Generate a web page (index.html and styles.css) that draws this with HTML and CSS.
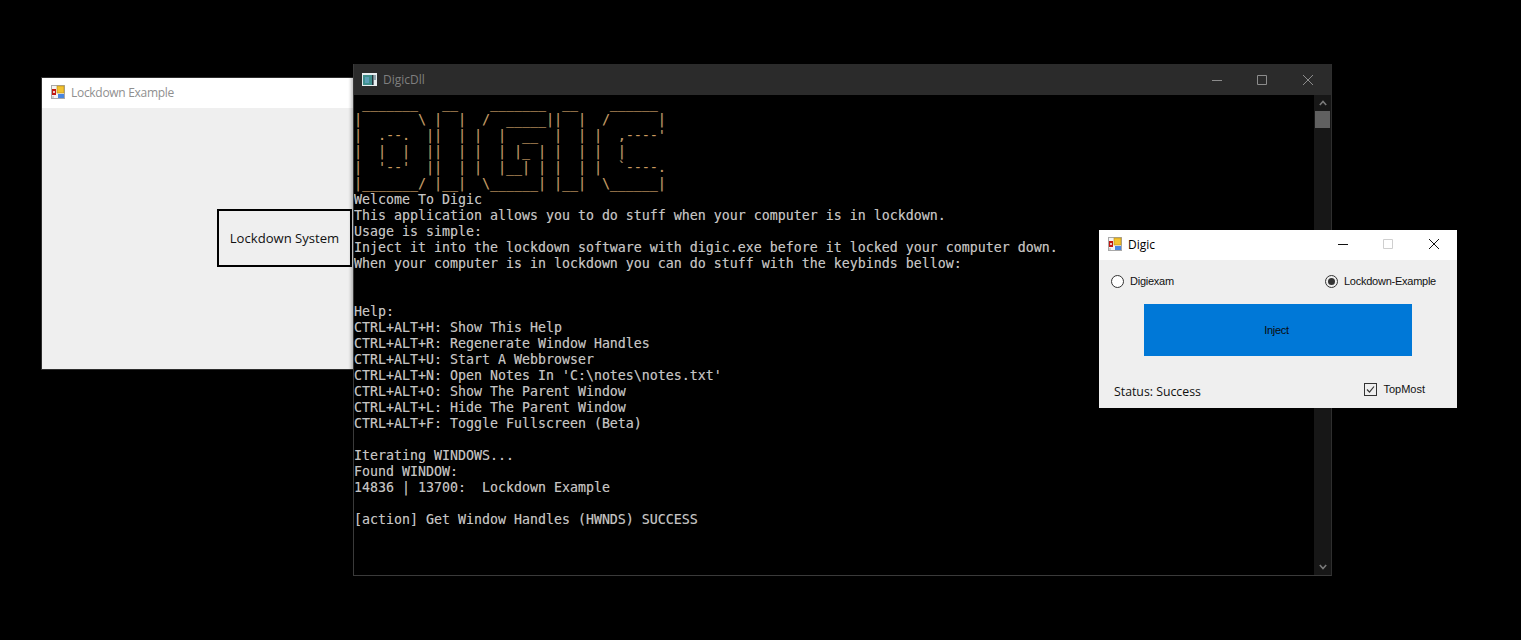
FILE: index.html
```
<!DOCTYPE html>
<html lang="en">
<head>
<meta charset="utf-8">
<title>Digic</title>
<link rel="stylesheet" href="styles.css">
</head>
<body>
<section class="window lockdown">
  <header class="titlebar light">
    <svg class="app-icon" viewBox="0 0 14 14"><rect x=".5" y=".5" width="13" height="13" fill="#f4f4f4" stroke="#a8a8a8"/><rect x="6" y="1" width="7" height="7" fill="#f2c230" stroke="#b98a10" stroke-width=".6"/><rect x="1" y="4" width="4" height="6" fill="#c21a12"/><rect x="2.2" y="6" width="1.6" height="2" fill="#f4f4f4"/><rect x="7" y="9" width="6" height="4" fill="#4a86e0"/><rect x="1" y="11" width="2" height="2" fill="#cfcfcf"/></svg>
    <span class="title muted">Lockdown Example</span>
  </header>
  <div class="lockdown-body">
    <button class="lock-button" type="button">Lockdown System</button>
  </div>
</section>

<section class="window console">
  <header class="titlebar dark">
    <svg class="console-icon" viewBox="0 0 15 13"><rect width="15" height="13" fill="#e8eef0"/><rect x="1" y="2" width="9" height="10" fill="#3f8f8c"/><rect x="3" y="4" width="4" height="6" fill="#5b9fb5"/><rect x="10" y="2" width="1.6" height="10" fill="#22343c"/><rect x="12" y="2" width="2" height="5" fill="#8fa4ad"/></svg>
    <span class="title dim">DigicDll</span>
    <div class="controls dark-controls">
      <svg viewBox="0 0 10 10"><path d="M0 5.5H10" /></svg>
      <svg viewBox="0 0 10 10"><path d="M.5.5H9.5V9.5H.5Z" /></svg>
      <svg viewBox="0 0 10 10"><path d="M0 0L10 10M10 0L0 10" /></svg>
    </div>
  </header>
  <div class="console-body">
    <pre class="output"><span class="art"> _______   __    _______  __    ______ 
|       \ |  |  /  _____||  |  /      |
|  .--.  ||  | |  |  __  |  | |  ,----'
|  |  |  ||  | |  | |_ | |  | |  |     
|  '--'  ||  | |  |__| | |  | |  `----.
|_______/ |__|  \______| |__|  \______|
</span>Welcome To Digic
This application allows you to do stuff when your computer is in lockdown.
Usage is simple:
Inject it into the lockdown software with digic.exe before it locked your computer down.
When your computer is in lockdown you can do stuff with the keybinds bellow:


Help:
CTRL+ALT+H: Show This Help
CTRL+ALT+R: Regenerate Window Handles
CTRL+ALT+U: Start A Webbrowser
CTRL+ALT+N: Open Notes In 'C:\notes\notes.txt'
CTRL+ALT+O: Show The Parent Window
CTRL+ALT+L: Hide The Parent Window
CTRL+ALT+F: Toggle Fullscreen (Beta)

Iterating WINDOWS...
Found WINDOW:
14836 | 13700:  Lockdown Example

[action] Get Window Handles (HWNDS) SUCCESS</pre>
    <div class="scrollbar">
      <svg class="arrow" viewBox="0 0 8 6"><path d="M.8 5L4 1.5 7.2 5" /></svg>
      <div class="thumb"></div>
      <div class="spacer"></div>
      <svg class="arrow" viewBox="0 0 8 6"><path d="M.8 1L4 4.5 7.2 1" /></svg>
    </div>
  </div>
</section>

<section class="window digic">
  <header class="titlebar light">
    <svg class="app-icon" viewBox="0 0 14 14"><rect x=".5" y=".5" width="13" height="13" fill="#f4f4f4" stroke="#a8a8a8"/><rect x="6" y="1" width="7" height="7" fill="#f2c230" stroke="#b98a10" stroke-width=".6"/><rect x="1" y="4" width="4" height="6" fill="#c21a12"/><rect x="2.2" y="6" width="1.6" height="2" fill="#f4f4f4"/><rect x="7" y="9" width="6" height="4" fill="#4a86e0"/><rect x="1" y="11" width="2" height="2" fill="#cfcfcf"/></svg>
    <span class="title">Digic</span>
    <div class="controls light-controls">
      <svg viewBox="0 0 10 10"><path d="M0 5.5H10" /></svg>
      <svg class="disabled" viewBox="0 0 10 10"><path d="M.5.5H9.5V9.5H.5Z" /></svg>
      <svg viewBox="0 0 10 10"><path d="M0 0L10 10M10 0L0 10" /></svg>
    </div>
  </header>
  <div class="digic-body">
    <div class="radio-row">
      <label class="radio"><span class="dot"></span>Digiexam</label>
      <label class="radio"><span class="dot on"></span>Lockdown-Example</label>
    </div>
    <button class="inject" type="button">Inject</button>
    <div class="status-row">
      <span class="status">Status: Success</span>
      <label class="check">
        <svg class="box" viewBox="0 0 13 13"><rect x=".5" y=".5" width="12" height="12" fill="none" stroke="#333"/><path d="M3 6.5L5.5 9.2 10 3.5" fill="none" stroke="#333" stroke-width="1.2"/></svg>
        TopMost
      </label>
    </div>
  </div>
</section>
</body>
</html>
```
FILE: styles.css
```
* { box-sizing: border-box; }
html, body { margin: 0; height: 100%; }
body { background: #000; overflow: hidden; position: relative; font-family: "Open Sans", "Noto Sans", sans-serif; }

.window { position: absolute; display: flex; flex-direction: column; }
.titlebar { display: flex; align-items: center; flex: none; }
.titlebar.light { background: #fff; height: 30px; padding-bottom: 2px; }
.titlebar.dark { background: #2b2b2b; height: 31px; }
.title { font-size: 12px; color: #000; }
.title.muted { color: #8f8f8f; letter-spacing: -.3px; }
.title.dim { color: #7f7f7f; }
.app-icon { width: 14px; height: 14px; flex: none; }

.controls { margin-left: auto; display: flex; gap: 35px; padding-right: 18px; }
.controls svg { width: 10px; height: 10px; fill: none; stroke-width: 1; flex: none; }
.controls svg:last-child { margin-left: 1px; }
.dark-controls svg { stroke: #8c8c8c; }
.light-controls svg { stroke: #111; }
.light-controls svg.disabled { stroke: #cfcfcf; }

/* Lockdown Example window */
.lockdown { left: 41px; top: 77px; width: 320px; height: 293px; border: 1px solid #2e2e2e; background: #efefef; }
.lockdown .titlebar { padding-left: 9px; gap: 6px; }
.lockdown-body { flex: 1; padding: 101px 0 0 175px; }
.lock-button { width: 135px; height: 58px; border: 2px solid #000; background: transparent; padding: 0; font: 13.1px "Open Sans", sans-serif; color: #111; }

/* Console window */
.console { left: 353px; top: 64px; width: 979px; height: 512px; border: 1px solid #3a3a3a; border-top: 0; border-right-color: #2e2e2e; background: #000; box-shadow: -2px 0 3px rgba(0,0,0,.25); }
.console .titlebar { padding-left: 8px; gap: 6px; }
.console-icon { width: 15px; height: 13px; flex: none; }
.console-body { flex: 1; display: flex; min-height: 0; }
.output { flex: 1; margin: 0; padding-top: 1px; font: 13.29px/16px "DejaVu Sans Mono", monospace; color: #c4c4c4; text-shadow: -.3px 0 rgba(205,130,50,.35), .3px 0 rgba(70,140,210,.35); overflow: hidden; white-space: pre; }
.art { color: #d09a52; text-shadow: .6px 0 rgba(70,130,190,.4); }
.scrollbar { width: 17px; flex: none; background: #171717; display: flex; flex-direction: column; align-items: center; }
.arrow { width: 8px; height: 6px; fill: none; stroke: #7a7a7a; stroke-width: 1.6; margin: 5px 0; flex: none; }
.thumb { width: 15px; height: 17px; background: #606060; flex: none; }
.spacer { flex: 1; }

/* Digic window */
.digic { left: 1099px; top: 230px; width: 358px; height: 178px; background: #efefef; }
.digic .titlebar { padding-left: 9px; gap: 6px; }
.digic-body { flex: 1; display: flex; flex-direction: column; padding-top: 14px; }
.radio-row { display: flex; justify-content: space-between; padding: 0 21px 0 12px; }
.radio { display: flex; align-items: center; gap: 6px; font: 11px/14px "Liberation Sans", sans-serif; letter-spacing: -.25px; color: #111; }
.dot { width: 13px; height: 13px; border-radius: 50%; border: 1px solid #333; background: #fff; display: flex; flex: none; }
.dot.on { padding: 2px; background-clip: content-box; background-color: #333; }
.inject { align-self: flex-start; margin: 16px 0 0 45px; width: 268px; height: 52px; border: 0; background: #0078d7; padding: 0 3px 0 0; font: 11px "Liberation Sans", sans-serif; letter-spacing: -.3px; color: #0b0b0b; }
.status-row { display: flex; justify-content: space-between; align-items: center; padding: 25px 32px 0 15px; }
.status { font-size: 12.3px; line-height: 16px; color: #111; margin-top: 3px; }
.check { display: flex; align-items: center; gap: 6px; font: 11px/14px "Liberation Sans", sans-serif; color: #111; margin-top: -3px; }
.box { width: 13px; height: 13px; flex: none; }
```
